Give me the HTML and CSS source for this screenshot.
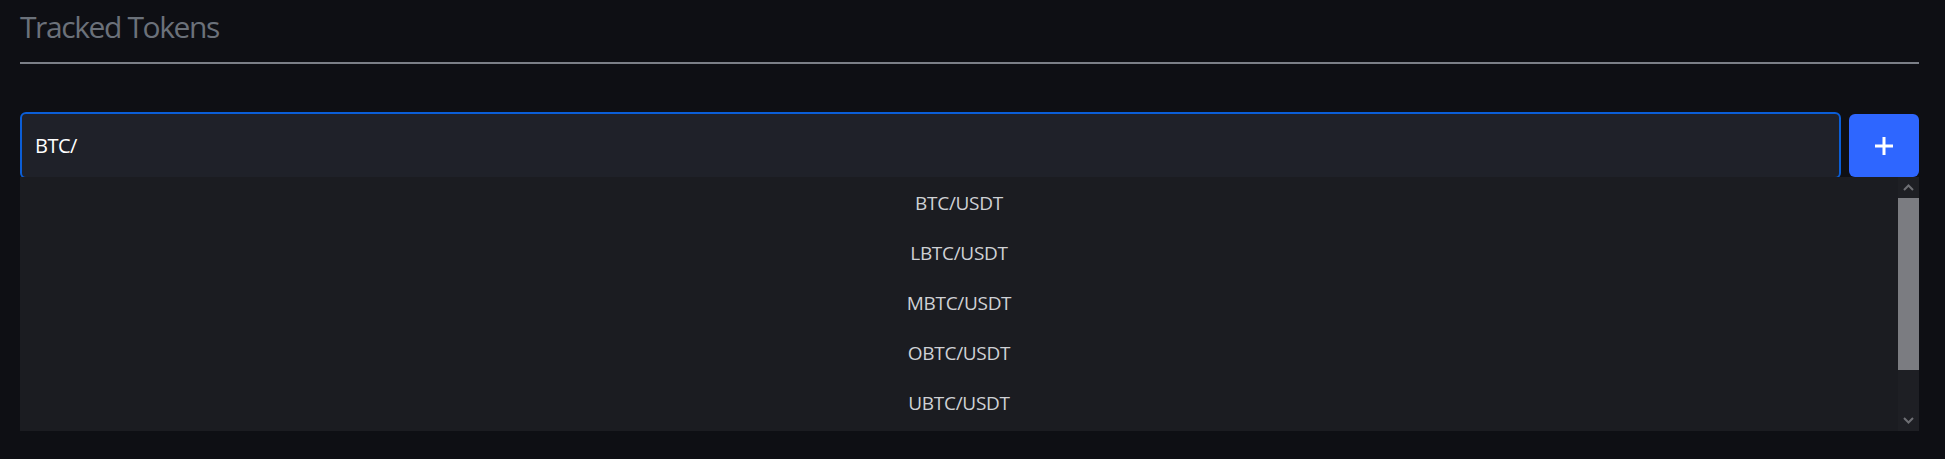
FILE: index.html
```html
<!DOCTYPE html>
<html lang="en">
<head>
<meta charset="utf-8">
<title>Tracked Tokens</title>
<link rel="stylesheet" href="styles.css">
</head>
<body>
<div class="page">
  <h2 class="title">Tracked Tokens</h2>
  <div class="rule"></div>
  <div class="search">
    <input class="token-input" type="text" value="BTC/">
    <button class="add-btn" type="button" aria-label="Add">
      <svg width="20" height="20" viewBox="0 0 20 20"><path d="M10 1v18M1 10h18" stroke="#fff" stroke-width="3" fill="none"/></svg>
    </button>
    <div class="dropdown">
      <ul class="options">
        <li class="option">BTC/USDT</li>
        <li class="option">LBTC/USDT</li>
        <li class="option">MBTC/USDT</li>
        <li class="option">OBTC/USDT</li>
        <li class="option">UBTC/USDT</li>
      </ul>
      <div class="scrollbar">
        <div class="sb-btn">
          <svg width="11" height="7" viewBox="0 0 11 7"><path d="M1 6l4.5-4.5L10 6" stroke="#6e6f74" stroke-width="2" fill="none"/></svg>
        </div>
        <div class="sb-track">
          <div class="sb-thumb"></div>
        </div>
        <div class="sb-btn">
          <svg width="11" height="7" viewBox="0 0 11 7"><path d="M1 1l4.5 4.5L10 1" stroke="#6e6f74" stroke-width="2" fill="none"/></svg>
        </div>
      </div>
    </div>
  </div>
</div>
</body>
</html>
```

FILE: styles.css
```css
* { box-sizing: border-box; }
html, body {
  margin: 0;
  padding: 0;
  background: #0e0f14;
  height: 100%;
}
body {
  font-family: "Open Sans", "Noto Sans", sans-serif;
  overflow: hidden;
}
.page {
  padding: 0 26px 0 20px;
}
.title {
  margin: 8px 0 0 0;
  font-size: 30px;
  line-height: 37px;
  font-weight: 400;
  letter-spacing: -1.4px;
  color: #6b717a;
}
.rule {
  margin-top: 17px;
  height: 2px;
  background: #7b7f87;
}
.search {
  position: relative;
  margin-top: 48px;
  display: flex;
  align-items: center;
  gap: 8px;
}
.token-input {
  flex: 1;
  height: 67px;
  margin: 0;
  padding: 0 13px;
  border: 2px solid #0b5ed7;
  border-radius: 6px;
  background: #1f2129;
  color: #ffffff;
  font-family: "Open Sans", "Noto Sans", sans-serif;
  font-size: 20px;
  letter-spacing: -0.5px;
  outline: none;
}
.add-btn {
  width: 70px;
  height: 63px;
  margin: 0;
  padding: 0;
  border: none;
  border-radius: 6px;
  background: #2e66ff;
  display: flex;
  align-items: center;
  justify-content: center;
}
.dropdown {
  position: absolute;
  left: 0;
  right: 0;
  top: 65px;
  height: 254px;
  background: #1b1c21;
  display: flex;
}
.options {
  flex: 1;
  margin: 0;
  padding: 1px 0 0 0;
  list-style: none;
  overflow: hidden;
}
.option {
  height: 50px;
  display: flex;
  align-items: center;
  justify-content: center;
  font-size: 19px;
  letter-spacing: -0.3px;
  color: #cfd1d5;
}
.scrollbar {
  width: 21px;
  display: flex;
  flex-direction: column;
  background: #1e1f24;
}
.sb-btn {
  height: 21px;
  display: flex;
  align-items: center;
  justify-content: center;
}
.sb-track {
  flex: 1;
}
.sb-thumb {
  height: 172px;
  background: #7b7c81;
}
```
